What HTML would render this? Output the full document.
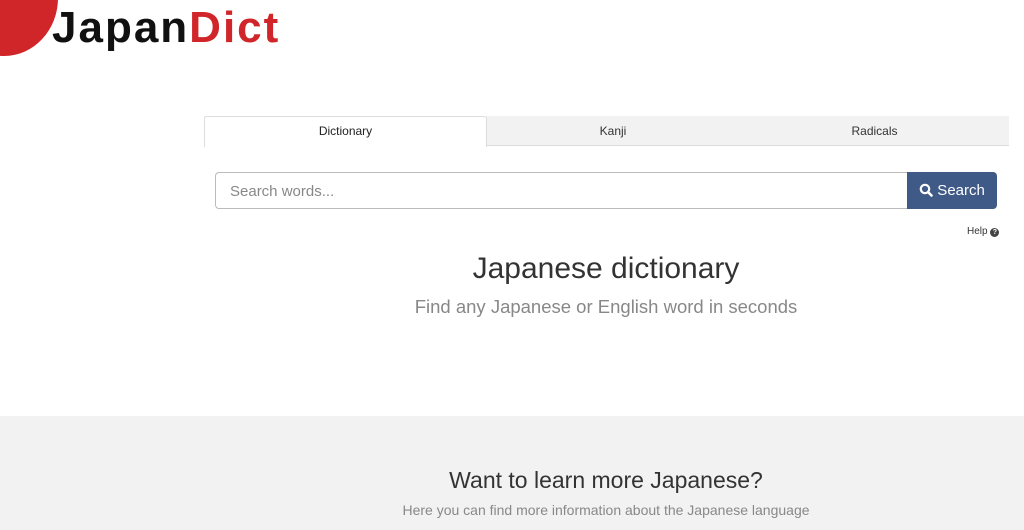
<!DOCTYPE html>
<html><head><style>
body{margin:0;width:1024px;height:530px;overflow:hidden;background:#fff;font-family:"Liberation Sans","DejaVu Sans",sans-serif;position:relative}
.a{position:absolute}
</style></head><body>
<div class="a" style="left:-50px;top:-60px;width:108px;height:116px;border-radius:50%;background:#d0262a"></div>
<div class="a" style="left:52px;top:3px;font-size:44px;font-weight:bold;letter-spacing:2px;color:#111">Japan<span style="color:#d0262a">Dict</span></div>
<div class="a" style="left:204px;top:116px;width:805px;height:29px;background:#f2f2f2;border-bottom:1px solid #ddd"></div>
<div class="a" style="left:204px;top:116px;width:281px;height:30px;background:#fff;border:1px solid #ddd;border-bottom:none;border-radius:3px 3px 0 0;font-size:12px;line-height:29px;text-align:center;color:#222">Dictionary</div>
<div class="a" style="left:486px;top:117px;width:254px;line-height:29px;font-size:12px;text-align:center;color:#333">Kanji</div>
<div class="a" style="left:740px;top:117px;width:269px;line-height:29px;font-size:12px;text-align:center;color:#333">Radicals</div>
<div class="a" style="left:215px;top:172px;border:1px solid #bbb;border-right:none;border-radius:4px 0 0 4px;box-sizing:border-box;width:692px;height:37px"></div>
<div class="a" style="left:230px;top:173px;line-height:37px;font-size:15px;color:#888">Search words...</div>
<div class="a" style="left:907px;top:172px;width:90px;height:37px;background:#3f5a86;border-radius:0 4px 4px 0;color:#fff;font-size:15px;line-height:38px;text-align:center">
<svg width="14" height="14" viewBox="0 0 14 14" style="vertical-align:-2px"><circle cx="6" cy="6" r="4.2" fill="none" stroke="#fff" stroke-width="2.2"/><path d="M9 9l3.5 3.5" stroke="#fff" stroke-width="2.6" stroke-linecap="round"/></svg> Search</div>
<div class="a" style="left:967px;top:226px;font-size:10px;color:#333">Help <span style="display:inline-block;width:9px;height:9px;border-radius:50%;background:#444;color:#fff;font-size:7px;line-height:9px;text-align:center;font-weight:bold">?</span></div>
<div class="a" style="left:0;width:1212px;top:252px;text-align:center;font-size:30px;color:#333">Japanese dictionary</div>
<div class="a" style="left:0;width:1212px;top:296px;text-align:center;font-size:18.5px;color:#888">Find any Japanese or English word in seconds</div>
<div class="a" style="left:0;top:416px;width:1024px;height:114px;background:#f2f2f2"></div>
<div class="a" style="left:0;width:1212px;top:467px;text-align:center;font-size:23px;color:#333">Want to learn more Japanese?</div>
<div class="a" style="left:0;width:1212px;top:502px;text-align:center;font-size:14px;color:#888">Here you can find more information about the Japanese language</div>
</body></html>
